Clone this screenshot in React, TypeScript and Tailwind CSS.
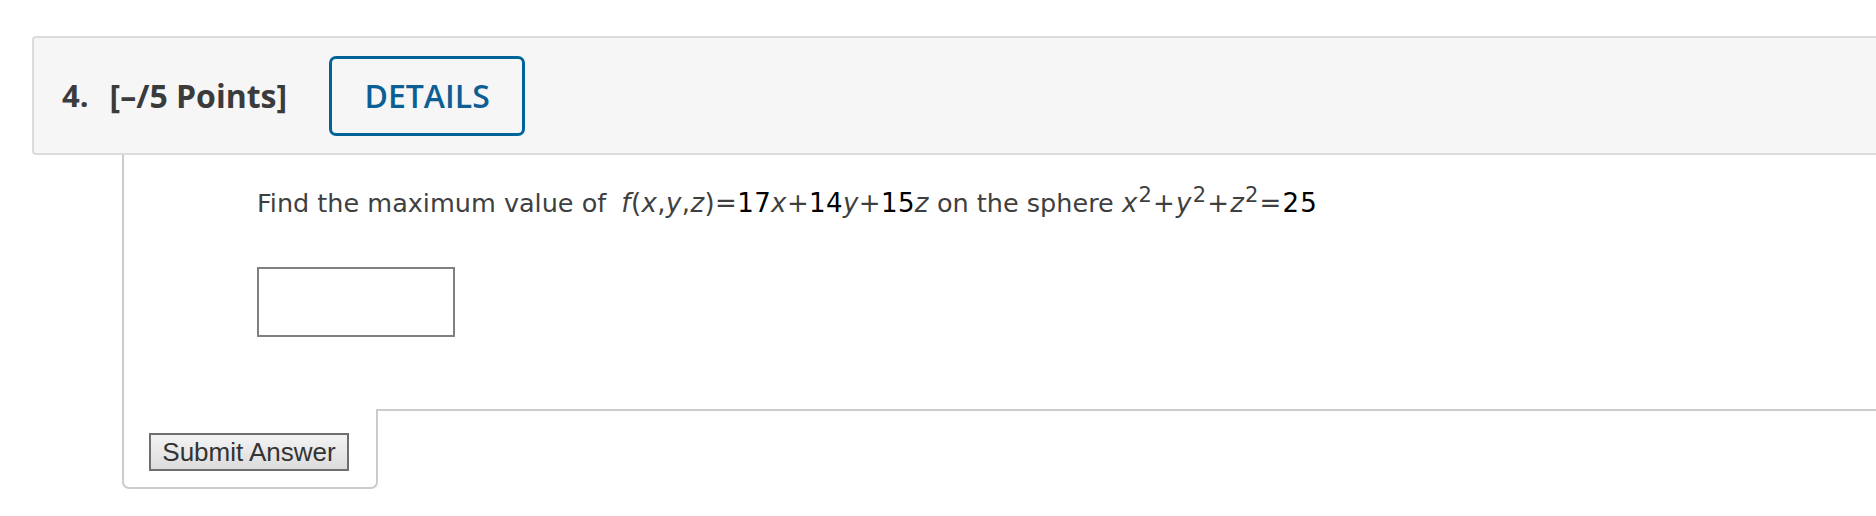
import React from "react";

const qFont = { fontFamily: '"DejaVu Sans", Verdana, sans-serif' };

function N({ children }: { children: React.ReactNode }) {
  return <span className="text-black">{children}</span>;
}

export default function App() {
  return (
    <div className="w-[1876px] h-[516px] bg-white overflow-hidden">
      <div className="pt-[36px] pl-[32px]">
        <div className="flex items-center h-[119px] bg-[#f6f6f6] border-2 border-r-0 border-[#dcdcdc] rounded-l-[4px] pl-[28px] font-['Open_Sans',sans-serif]">
          <span className="text-[31px] font-bold text-[#3b3b3b] leading-none">4.</span>
          <span className="ml-[21px] text-[32px] font-bold text-[#3b3b3b] leading-none">[–/5 Points]</span>
          <div className="ml-[42px] w-[196px] h-[80px] border-[3px] border-[#00639a] rounded-[7px] flex items-center justify-center">
            <span className="text-[32px] font-semibold text-[#0c5f95] leading-none">DETAILS</span>
          </div>
        </div>
      </div>
      <div className="ml-[122px] flex flex-col">
        <div className="border-l-2 border-[#cccccc] pl-[133px] pt-[30px] h-[254px]">
          <div className="text-[25.5px] leading-[36px] text-[#3f3f3f] whitespace-nowrap" style={qFont}>
            Find the maximum value of{" "}
            <span className="ml-[7px] text-[26px] tracking-[0.4px]">
              <i>f</i>(<i>x</i>,<i>y</i>,<i>z</i>)=<N>17</N>
              <i>x</i>+<N>14</N>
              <i>y</i>+<N>15</N>
              <i>z</i>
            </span>{" "}
            on the sphere{" "}
            <span className="text-[26px] tracking-[1.2px]">
              <i>x</i>
              <sup className="text-[21px]">2</sup>+<i>y</i>
              <sup className="text-[21px]">2</sup>+<i>z</i>
              <sup className="text-[21px]">2</sup>=<N>25</N>
            </span>
          </div>
          <div className="mt-[46px] w-[198px] h-[70px] border-2 border-[#808080] bg-white" />
        </div>
        <div className="flex">
          <div className="w-[256px] h-[80px] border-l-2 border-b-2 border-r-2 border-[#cccccc] rounded-b-[7px] pl-[25px] pt-[24px]">
            <button className="w-[200px] h-[38px] border-2 border-[#6e6e6e] bg-gradient-to-b from-[#f3f3f3] to-[#dcdcdc] text-[26px] leading-none text-[#333333] font-['Liberation_Sans',Arial,sans-serif] flex items-center justify-center">
              Submit Answer
            </button>
          </div>
          <div className="flex-1 border-t-2 border-[#cccccc]" />
        </div>
      </div>
    </div>
  );
}
